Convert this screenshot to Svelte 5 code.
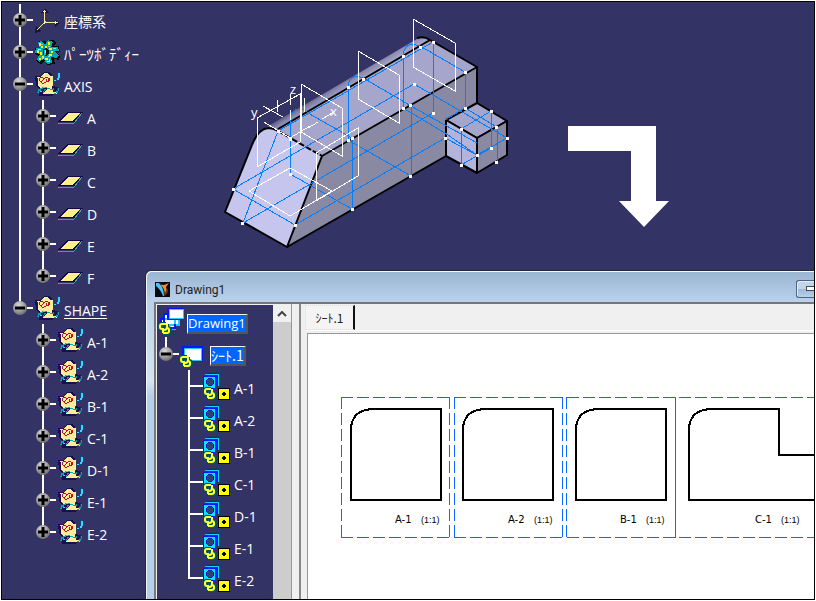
<script>
  const planes = ['A', 'B', 'C', 'D', 'E', 'F'];
  const shapes = ['A-1', 'A-2', 'B-1', 'C-1', 'D-1', 'E-1', 'E-2'];

  const branches = [
    { label: 'AXIS', icon: 'set', children: planes, childIcon: 'plane' },
    { label: 'SHAPE', icon: 'set', children: shapes, childIcon: 'set', active: true }
  ];

  const views = [
    { name: 'A-1', x: 341, label: 395 },
    { name: 'A-2', x: 453, label: 508 },
    { name: 'B-1', x: 566, label: 620 },
    { name: 'C-1', x: 679, label: 755 }
  ];
  const originX = 308;
  const originY = 334;

  // Construction curves of the solid, in scene coordinates
  const wires = [
    'M233 189L295 225M243 223L278 131L433 42V113M233 189L414 84L507 138',
    'M243 223L433 113M295 225L445 138',
    'M290 174V118Q292 109 300 109Q304 109 308 113L352 138V209L290 174',
    'M348 140V85Q350 76 358 76L365 79L411 106V176L348 140',
    'M403 108V56Q404 45 412 44L420 46L465 72V108M403 108L445 133L477 155L507 138M411 106L477 143',
    'M445 138L477 155M461 129L491 111V148L461 165ZM445 120L465 108L497 127V162'
  ];
  const points = [
    [233, 189], [242, 223], [295, 225], [290, 174], [278, 131], [290, 139], [352, 138], [352, 209],
    [348, 87], [348, 140], [363, 79], [410, 105], [410, 176], [403, 56], [403, 108], [420, 47],
    [433, 42], [433, 113], [414, 84], [465, 72], [465, 108], [445, 138], [461, 129], [461, 165],
    [477, 155], [491, 111], [491, 148], [496, 127], [496, 162], [507, 138]
  ];
</script>

{#snippet knob(minus)}
  <svg class="knob" viewBox="0 0 14 14" aria-hidden="true">
    <defs>
      <radialGradient id="ball" cx="0.4" cy="0.3" r="0.75">
        <stop offset="0" stop-color="#d8d8d8" />
        <stop offset="0.6" stop-color="#999" />
        <stop offset="1" stop-color="#666" />
      </radialGradient>
    </defs>
    <circle cx="7" cy="7" r="7" fill="url(#ball)" />
    <path d={minus ? 'M2 7H12' : 'M2 7H12M7 2V12'} stroke="#000" stroke-width="3" />
  </svg>
{/snippet}

{#snippet icon(kind)}
  <svg class="icon" viewBox="0 0 25 25" aria-hidden="true" shape-rendering="crispEdges">
    {#if kind === 'axes'}
      <path d="M10 0L14 5H6ZM25 15L20 12V19ZM0 25L1 18L6 23Z" fill="#1a1050" />
      <path d="M9 2h1v13h-1zM10 14h13v1h-13zM8 15h2v1h-2zM7 16h1v1h-1zM6 17h1v1h-1zM5 18h1v1h-1zM4 19h1v1h-1zM3 20h1v1h-1zM2 21h1v1h-1zM8 3h3v1h-3zM20 13h1v3h-1zM9 13h2v2h-2z" fill="#ffec96" />
    {:else if kind === 'gear'}
      <path d="M4 1H10L12 3L14 0H19L21 3L19 6L24 6L25 12L21 12L25 16L24 20L19 19L20 24L12 25L10 21L6 24L1 21L4 16L0 14L0 8L5 8Z" fill="#06060c" />
      <path d="M3 2L7 1L10 5L13 0L18 2L16 7L23 7L24 11L19 11L24 15L21 18L16 17L17 23L12 24L9 19L4 22L2 19L5 14L0 13L1 8L5 8Z" fill="#00a8b2" />
      <path d="M4 3h2v3h-2zM6 6h2v2h-2zM10 6h2v2h-2zM13 2h2v3h-2zM3 9h3v1h-3zM2 11h2v2h-2zM5 12h2v3h-2zM7 16h2v2h-2zM4 18h2v2h-2zM10 18h3v2h-3zM14 14h3v2h-3zM14 8h3v2h-3zM12 21h2v1h-2zM16 11h2v2h-2z" fill="#fff200" />
      <path d="M6 4h2v1h-2zM13 6h2v1h-2zM2 10h2v1h-2zM7 18h2v1h-2zM13 16h2v1h-2zM14 19h1v3h-1zM18 8h3v1h-3z" fill="#7df" />
      <path d="M8 9L11 8L14 10L14 14L11 16L8 15Z" fill="#111" />
      <path d="M9 10h2v5h-2z" fill="#00c8d0" />
      <path d="M10 10h1v3h-1z" fill="#fff200" />
    {:else if kind === 'plane'}
      <path d="M0 18H17L25 8H9Z" fill="#120a48" />
      <path d="M0 19H16L24 9" fill="none" stroke="#3ba3a8" stroke-width="1" />
      <path d="M3 17H15L22 9H10Z" fill="#fff08a" />
    {:else}
      <path d="M0 4H5L9 0H14L17 3V14L23 15L18 24H4V16L1 14Z" fill="#1a1050" />
      <path d="M2 5H6L9 1H13L15 4H18V13L16 16H5L3 14V7Z" fill="#ffec96" />
      <path d="M8 22L11 18L17 15L18 20H23L21 22Z" fill="#ffec96" />
      <path d="M5 5h3v1h-3zM4 6h1v3h-1zM8 6h1v2h-1zM5 9h2v1h-2zM7 8h1v1h-1zM10 5h3v1h-3zM13 6h2v3h-2zM9 6h1v1h-1zM11 9h3v1h-3zM9 10h2v1h-2zM7 11h2v1h-2zM6 10h1v1h-1zM11 7h1v2h-1z" fill="#b51325" />
      <path d="M4 17h1v-1h2v-1h5v1h3v1h3v-1h1v2h-4v-1h-3v-1h-4v1h-2v2h-2v2h-2v-1h1v-2h-1zM9 17h2v1h-1v1h-1v2h-1v-2h1zM24 16v3h-1v2h-2v1h-2v-1h2v-2h2v-3z" fill="#00a6b4" />
      <path d="M22 0h2v7h-1v2h-2v1h-2v-2h2v-2h1z" fill="#0a4a80" />
      <path d="M23 1h2v5h-1v2h-2v-2h1zM19 8h2v1h-2zM8 15h2v1h-2zM5 19h2v1h-2z" fill="#35d6ff" />
    {/if}
  </svg>
{/snippet}

{#snippet link()}
  <g fill="none" shape-rendering="auto">
    <path d="M8 2H3Q2 2 2 4V5Q2 7 4 7H6M5 11H10Q12 11 12 9V8Q12 6 10 6H8M9 2V6Q9 8 6 8M5 11V8Q5 5 8 5" stroke="#00555c" stroke-width="4" />
    <path d="M8 2H4Q2 2 2 4V5Q2 7 4 7H6M5 11H9Q11 11 11 9V8Q11 6 9 6M9 2V5Q9 8 6 8M5 11V8" stroke="#ffff2a" stroke-width="2" />
  </g>
{/snippet}

<main>
  <nav aria-label="Specification tree">
    <ul class="tree">
      <li>
        <div class="row"><span class="joint">{@render knob(false)}</span><i></i>{@render icon('axes')}<span class="text jp">座標系</span></div>
      </li>
      <li>
        <div class="row"><span class="joint">{@render knob(false)}</span><i></i>{@render icon('gear')}<span class="text half">ﾊﾟｰﾂﾎﾞﾃﾞｨｰ</span></div>
      </li>
      {#each branches as branch}
        <li>
          <div class="row">
            <span class="joint">{@render knob(true)}</span><i></i>{@render icon(branch.icon)}
            <span class="text" class:active={branch.active}>{branch.label}</span>
          </div>
          <ul>
            {#each branch.children as child}
              <li>
                <div class="row"><span class="joint">{@render knob(false)}</span><i></i>{@render icon(branch.childIcon)}<span class="text">{child}</span></div>
              </li>
            {/each}
          </ul>
        </li>
      {/each}
    </ul>
  </nav>

  <svg class="scene" viewBox="215 10 460 245" role="img" aria-label="3D part with section planes">
    <defs>
      <linearGradient id="fillet" gradientUnits="userSpaceOnUse" x1="352" y1="86" x2="345" y2="75">
        <stop offset="0" stop-color="#a3a3c8" />
        <stop offset="0.5" stop-color="#8585aa" />
        <stop offset="1" stop-color="#484874" />
      </linearGradient>
    </defs>
    <path d="M263 129L417 39L424 37L432 41L280 132Z" fill="url(#fillet)" />
    <path d="M278 131L430 40L477 67L322 156Z" fill="#a6a6cc" />
    <path d="M322 156L477 67V138L446 156L287 247Z" fill="#8989a4" />
    <path d="M225 212L252 145Q258 129 268 128Q273 128 278 131L322 156L287 247Z" fill="#c5c5ee" />
    <g stroke="#000" stroke-width="2" fill="none" stroke-linejoin="round">
      <path d="M252 145L225 212L287 247L322 156L477 67V104M287 247L446 156M278 129L430 40M417 38Q424 36 430 40L477 67" />
      <path d="M252 145Q258 129 268 128Q273 128 278 131" />
      <path d="M278 131L322 156" stroke-dasharray="6 2" />
      <path d="M446 120L477 103L507 121L477 138Z" fill="#a6a6cc" />
      <path d="M446 120L477 138V173L446 156Z" fill="#b3b3dc" />
      <path d="M477 138L507 121V155L477 173Z" fill="#8989a4" />
    </g>
    <g stroke="#0080ff" fill="none" shape-rendering="crispEdges">
      {#each wires as d}<path {d} />{/each}
    </g>
    <g stroke="#fff" fill="none" shape-rendering="crispEdges">
      <path d="M257 118L300 94V142L257 167ZM301 84L342 108V156L301 132ZM316 153L358 128V176L316 201ZM249 191L290 168L332 191L290 216Z" />
      <path d="M358 51L399 75V123L358 99ZM413 19L455 43V91L413 67Z" />
      <path d="M263 106L283 117M277 100V112M290 94V105M290 110V120M304 98V112M264 122L290 138L310 126M308 128L318 122M322 119L334 112" />
    </g>
    {#each points as [x, y]}<rect x={x - 1} y={y - 1} width="3" height="3" fill="#fff" />{/each}
    <g class="axis-names"><text x="290" y="94">z</text><text x="251" y="117">y</text><text x="330" y="116">x</text></g>
    <path d="M568 126H656V201H669L644 227L619 201H631V151H568Z" fill="#fff" />
  </svg>

  <section class="window" aria-label="Drawing1">
    <header>
      <svg class="logo" viewBox="0 0 15 15" aria-hidden="true">
        <path d="M0 0H15V15H0Z" fill="#050a12" />
        <path d="M1 1L4 1Q9 6 9 14L8 14Q6 8 1 4Z" fill="#49c4f5" />
        <path d="M4 1Q11 5 9 14Q13 12 13 8L9 3Z" fill="#7a300f" />
        <path d="M6 3Q9 6 10 11Q12 8 11 5L14 1L9 3Z" fill="#f08a34" />
      </svg>
      <span class="title">Drawing1</span>
      <button class="minimize" aria-label="Minimize"><span></span></button>
    </header>
    <div class="body">
      <div class="outline">
        <div class="head">
          <svg class="sheets" viewBox="0 0 27 28" aria-hidden="true" shape-rendering="crispEdges">
            <path d="M3 12H17V22H3ZM6 7H21V18H6Z" fill="#fff" stroke="#22c8ff" stroke-width="2" />
            <path d="M3 20V12H6M6 16V7H10M12 21H17V17" fill="none" stroke="#0018ff" stroke-width="2" />
            <path d="M9 1H26V13H9Z" fill="#0018ff" />
            <path d="M11 2H25V11H11Z" fill="#fff" stroke="#22c8ff" />
            <g transform="translate(0 15)">{@render link()}</g>
          </svg>
          <span class="chip text">Drawing1</span>
        </div>
        <div class="head sheet">
          <span class="stem">{@render knob(true)}</span><i></i>
          <svg class="sheets" viewBox="0 0 27 28" aria-hidden="true" shape-rendering="crispEdges">
            <path d="M3 4H24V20H3Z" fill="#0018ff" />
            <path d="M5 6H22V18H5Z" fill="#fff" stroke="#22c8ff" />
            <g transform="translate(0 13)">{@render link()}</g>
          </svg>
          <span class="chip text half">ｼｰﾄ.1</span>
        </div>
        <ul>
          {#each shapes as shape}
            <li>
              <span class="twig"></span>
              <svg class="view" viewBox="0 0 27 27" aria-hidden="true" shape-rendering="crispEdges">
                <path d="M2 0H16V13H2Z" fill="#0018ff" />
                <path d="M2 1H15V13" fill="none" stroke="#19d3ff" />
                <path d="M0 3H13V16H0Z" fill="#0018ff" />
                <path d="M1 4H12V15H1Z" fill="#00e4ff" />
                <circle cx="7" cy="9" r="4" fill="#0018c8" />
                <circle cx="7" cy="9" r="3" fill="#3c3c6e" />
                <g transform="translate(0 14)">{@render link()}</g>
                <path d="M15 15H26V26H15Z" fill="#ff0" stroke="#000" />
                <path d="M19 20H23V22H19ZM20 19H22V23H20Z" fill="#000" />
              </svg>
              <span class="text">{shape}</span>
            </li>
          {/each}
        </ul>
      </div>
      <div class="scroll">
        <button aria-label="Scroll up">
          <svg viewBox="0 0 10 6" aria-hidden="true"><path d="M1 5L5 1L9 5" fill="none" stroke="#444" stroke-width="2" /></svg>
        </button>
      </div>
      <div class="gutter"></div>
      <div class="pane">
        <div class="tabs"><button class="tab">ｼｰﾄ.1</button></div>
        <div class="paper">
          <svg viewBox="0 0 506 265" role="img" aria-label="Section views">
            <g transform="translate({-originX} {-originY})">
              <g fill="none" stroke="#0a6cff" shape-rendering="crispEdges" stroke-dasharray="12 4">
                <path d="M341 397H450M341 397V538M341 537H450M449 397V538" />
                <path d="M454 397H563M454 397V538M454 537H563M562 397V538" />
                <path d="M567 397H818M566 397V538M567 537H818" />
                <path d="M675 397V538" stroke-dasharray="none" />
              </g>
              {#each views as view, i}
                <path
                  d={i < 3
                    ? `M${view.x + 10} 500V430Q${view.x + 10} 409 ${view.x + 34} 409H${view.x + 100}V500Z`
                    : 'M820 500H689V430Q689 409 713 409H779V455H820'}
                  fill="none" stroke="#000" stroke-width="2" shape-rendering="crispEdges" />
                <text x={view.label} y="523">{view.name}</text>
                <text class="scale" x={view.label + 26} y="523">(1:1)</text>
              {/each}
            </g>
          </svg>
        </div>
      </div>
    </div>
  </section>
</main>

<style>
  :global(body) { background: #fff; }
  main {
    position: relative;
    box-sizing: border-box;
    height: calc(100vh - 2px);
    margin: 1px;
    overflow: hidden;
    border: 1px solid #000;
    background: #333366;
    color: #fff;
    font: 14px/20px "Open Sans", "Noto Sans CJK JP", sans-serif;
  }
  ul { list-style: none; margin: 0; padding: 0; }
  svg { display: block; flex: none; }
  nav { padding: 2px 0 0 10px; }
  .row { display: flex; align-items: center; height: 32px; }
  .joint {
    display: flex;
    align-items: center;
    align-self: stretch;
    width: 14px;
    margin-left: 1px;
    background: linear-gradient(#fff, #fff) 6px 0 / 2px 100% no-repeat;
  }
  .knob { width: 14px; height: 14px; }
  i { width: 6px; height: 2px; background: #fff; }
  .icon { width: 25px; height: 25px; margin-left: 2px; }
  .row .text { margin-left: 4px; padding-top: 6px; }
  .active { text-decoration: underline; text-underline-offset: 2px; }
  .half, .jp { font-family: "Noto Sans CJK JP", sans-serif; font-weight: 400; }
  .row .half { padding-top: 4px; font-size: 15px; }
  .row .jp { padding-top: 2px; }
  .tree ul {
    padding-left: 23px;
    background: linear-gradient(#fff, #fff) 7px 0 / 2px 100% no-repeat;
  }
  .tree > li:last-child ul { background: none; }
  .tree > li:last-child > .row > .joint,
  .tree ul li:last-child .joint { background-size: 2px 50%; }

  .scene { position: absolute; left: 213px; top: 8px; width: 460px; height: 245px; }
  .axis-names { fill: #fff; font-size: 13px; }

  .window {
    position: absolute;
    top: 268px;
    right: 0;
    bottom: 0;
    left: 143px;
    display: flex;
    flex-direction: column;
    padding-left: 8px;
    border: 1px solid #222a38;
    border-width: 1px 0 0 1px;
    border-radius: 6px 0 0 0;
    background: linear-gradient(#9ab5d2, #b9d1ea 30px, #d6e4f3 110px, #b5cfea 125px);
    box-shadow: inset 1px 1px #f4f9ff;
    color: #222;
  }
  header { display: flex; align-items: center; height: 31px; padding-top: 2px; box-sizing: border-box; }
  .logo { width: 15px; height: 15px; margin: 3px 5px 0 1px; }
  .title { flex: 1; padding-top: 4px; font: 12px/16px Roboto, sans-serif; }
  .minimize {
    display: flex;
    align-items: center;
    width: 18px;
    height: 18px;
    margin-top: 2px;
    padding: 0 0 0 9px;
    border: 1px solid #4d6484;
    border-right: 0;
    border-radius: 3px 0 0 3px;
    background: linear-gradient(#c3d5e9 50%, #9db9d6 50%, #b9d0e8);
    box-shadow: inset 1px 1px #e4eef8;
  }
  .minimize span { flex: 1; height: 3px; border: 1px solid #444c5c; border-right: 0; background: #fff; }
  .body {
    display: flex;
    flex: 1;
    min-height: 0;
    border: 2px solid #777;
    border-width: 2px 0 0 2px;
    background: #f0f0f0;
  }
  .outline { flex: none; width: 116px; margin: 1px 0 0 1px; overflow: hidden; background: #333366; color: #fff; }
  .head { display: flex; align-items: center; height: 32px; padding-left: 1px; }
  .sheets { width: 27px; height: 28px; }
  .chip {
    height: 17px;
    margin: 6px 0 0 2px;
    border: 1px solid #fff;
    border-right: 2px solid #555;
    border-bottom: 2px solid #555;
    background: #0066ff;
    font-size: 13px;
    line-height: 17px;
  }
  .head.sheet { height: 33px; padding-left: 2px; }
  .sheet .chip { margin: 4px 0 0 4px; font-size: 14px; }
  .stem {
    display: flex;
    align-items: center;
    align-self: stretch;
    width: 14px;
    background: linear-gradient(#fff, #fff) 6px 0 / 2px 50% no-repeat;
  }
  .sheet .sheets { margin-top: 4px; }
  .outline li { display: flex; align-items: center; height: 32px; padding-left: 31px; background: linear-gradient(#fff, #fff) 31px 0 / 2px 100% no-repeat; }
  .outline li:last-child { background-size: 2px 50%; }
  .twig { width: 15px; height: 2px; background: #fff; }
  .view { width: 27px; height: 27px; }
  li > .text { margin-left: 4px; padding-top: 5px; }
  .scroll { flex: none; width: 18px; margin-top: 1px; background: #cdcdcd; }
  .scroll button { display: grid; place-items: center; width: 18px; height: 17px; padding: 0; border: 0; background: #f0f0f0; }
  .scroll svg { width: 10px; height: 6px; }
  .gutter { flex: none; width: 7px; border-left: 1px solid #999; border-right: 2px solid #888; background: #f0f0f0; }
  .pane { display: flex; flex: 1; flex-direction: column; min-width: 0; padding-left: 4px; }
  .tabs { display: flex; height: 25px; padding-top: 1px; border-bottom: 1px solid #fff; }
  .tab {
    width: 50px;
    padding: 0;
    border: 1px dotted #ddd;
    border-right: 2px solid #111;
    background: #f4f4f4;
    color: #222;
    font: 12px/18px "Noto Sans CJK JP", sans-serif;
  }
  .paper { flex: 1; min-height: 0; margin: 2px 0 0 2px; overflow: hidden; border: 1px solid #999; border-width: 1px 0 0 1px; background: #fff; }
  .paper svg { width: 506px; height: 265px; }
  .paper text { fill: #000; font: 10px "DejaVu Sans", sans-serif; }
  .paper .scale { font: 9px "Liberation Sans", sans-serif; }
</style>
